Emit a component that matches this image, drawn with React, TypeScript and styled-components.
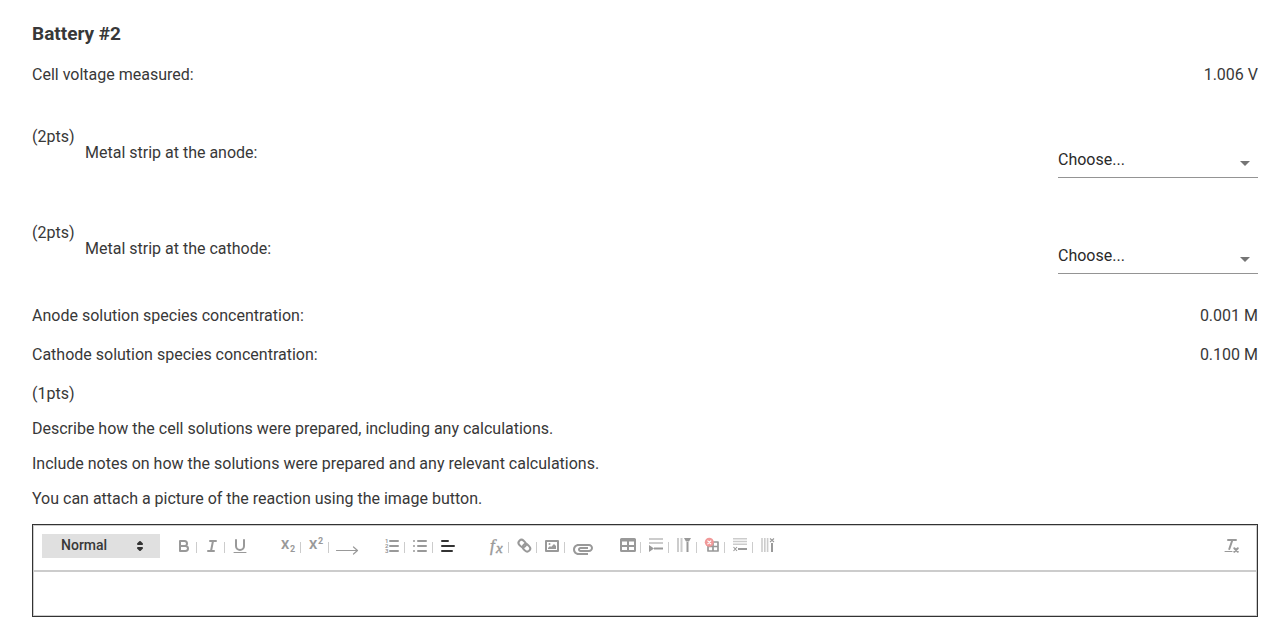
import React from "react";
import styled, { createGlobalStyle } from "styled-components";

const GlobalStyle = createGlobalStyle`
  *, *::before, *::after { box-sizing: border-box; }
  body {
    margin: 0;
    background: #fff;
    color: #383838;
    font: 400 16px/24px Roboto, sans-serif;
  }
`;

const Page = styled.main`
  padding: 22px 23px 5px 32px;
`;

const Title = styled.h3`
  margin: 0 0 17px;
  font-size: 19px;
  line-height: 24px;
  font-weight: 700;
`;

const ValueRow = styled.div`
  display: flex;
  justify-content: space-between;
  margin-bottom: 15px;
`;

const Question = styled.div`
  display: flex;
  align-items: flex-start;
  height: 58px;
  margin: 38px 0;

  & + & {
    margin-bottom: 25px;
  }
`;

const Points = styled.span`
  width: 53px;
`;

const QuestionLabel = styled.label`
  flex: 1;
  padding-top: 16px;
`;

const SelectField = styled.div`
  display: flex;
  align-items: center;
  width: 200px;
  height: 36px;
  margin-top: 17px;
  border-bottom: 1px solid #949494;
`;

const ChoiceSelect = styled.select`
  appearance: none;
  width: 100%;
  height: 35px;
  margin-right: -20px;
  padding: 0 20px 0 0;
  border: 0;
  background: transparent;
  color: #2a2a2a;
  font: inherit;
`;

const SelectArrow = styled.svg`
  flex: none;
  width: 10px;
  height: 5px;
  margin: 8px 8px 0 2px;
  fill: #757575;
  pointer-events: none;
`;

const Paragraph = styled.p`
  margin: 0 0 11px;
`;

const Editor = styled.section`
  margin-top: 13px;
  border: 1px solid #333;
`;

const Toolbar = styled.div`
  display: flex;
  flex-wrap: wrap;
  gap: 0 20px;
  padding: 8px 10px 12px 8px;
  border: 1px solid #ccc;
`;

const FormatPicker = styled.div`
  display: flex;
  align-items: center;
  width: 118px;
  height: 24px;
  margin-right: -10px;
  background: #e0e0e0;
`;

const FormatSelect = styled.select`
  appearance: none;
  width: 118px;
  height: 24px;
  margin-right: -29px;
  padding: 0 29px 2px 19px;
  border: 0;
  background: transparent;
  color: #383838;
  font: 500 14px/22px Roboto, sans-serif;
`;

const Group = styled.div`
  display: flex;
`;

const TrailingGroup = styled(Group)`
  margin-left: auto;
`;

const ToolButton = styled.button<{ $active?: boolean }>`
  display: flex;
  width: 26px;
  height: 24px;
  padding: 3px 3px 3px 5px;
  border: 0;
  background: none;
  color: ${(p) => (p.$active ? "#333" : "#999")};
  cursor: pointer;

  &:last-child {
    width: 28px;
  }
`;

const Separator = styled.span`
  width: 1px;
  height: 11px;
  margin: 8px 1px 0 0;
  background: #ccc;
`;

const IconSvg = styled.svg`
  flex: none;
  width: 18px;
  height: 18px;
  overflow: visible;
  fill: none;
  stroke: currentColor;
  stroke-width: 2;
  stroke-linecap: round;
  stroke-linejoin: round;

  text {
    fill: currentColor;
    stroke: none;
    font-family: Roboto, sans-serif;
    font-weight: 700;
  }
`;

const PickerIcon = styled(IconSvg)`
  margin-right: 11px;
  color: #333;
  pointer-events: none;
`;

const TextArea = styled.textarea`
  display: block;
  width: 100%;
  height: 45px;
  padding: 10px 14px;
  border: 1px solid #ccc;
  outline: 0;
  resize: none;
  font: inherit;
`;

const light = "#ccc";

const icons: Record<string, React.ReactNode> = {
  Bold: (
    <path d="M5 4h4.5a2.5 2.5 0 0 1 0 5H5zM5 9h5.5a2.5 2.5 0 0 1 0 5H5z" />
  ),
  Italic: <path d="M7 4h6M5 14h6M8 14l2-10" />,
  Underline: (
    <>
      <path d="M5 3v6a4 4 0 0 0 8 0V3" />
      <path d="M3 15.5h12" strokeWidth="1" />
    </>
  ),
  Subscript: (
    <>
      <text x="2" y="12" fontSize="13">X</text>
      <text x="11" y="15" fontSize="9">2</text>
    </>
  ),
  Superscript: (
    <>
      <text x="2" y="12" fontSize="13">X</text>
      <text x="11" y="7" fontSize="9">2</text>
    </>
  ),
  "Reaction arrow": <path d="M1.5 13.5H22M18.5 10l4 3.5-4 3.5" strokeWidth="1.2" />,
  "Numbered list": (
    <>
      <path d="M7 4h8M7 9h8M7 14h8" />
      <text x="2" y="6" fontSize="6">1</text>
      <text x="2" y="11" fontSize="6">2</text>
      <text x="2" y="16" fontSize="6">3</text>
    </>
  ),
  "Bullet list": <path d="M7 4h8M7 9h8M7 14h8M3 4h0M3 9h0M3 14h0" />,
  Align: <path d="M3 4h6M3 9h12M3 14h10" />,
  Formula: (
    <text x="3" y="14" fontSize="17" style={{ fontFamily: "Liberation Serif, serif", fontStyle: "italic", fontWeight: 400, stroke: "currentColor", strokeWidth: "0.4" }}>
      f<tspan x="9" y="16" fontSize="15">x</tspan>
    </text>
  ),
  Link: (
    <g transform="rotate(45 9 9)">
      <rect x="2" y="5.5" width="8" height="6" rx="3" />
      <rect x="8" y="5.5" width="8" height="6" rx="3" />
    </g>
  ),
  Image: (
    <>
      <path d="M3 4h12v10H3z" />
      <path d="M5 12v-1l2-2 1 1 3-3 2 2v3z" fill="currentColor" stroke="none" />
      <circle cx="6.5" cy="7" r="1" fill="currentColor" stroke="none" />
    </>
  ),
  Attachment: (
    <path
      fill="currentColor"
      stroke="none"
      d="M2 12.5C2 9.46 4.46 7 7.5 7H18c2.21 0 4 1.79 4 4s-1.79 4-4 4H9.5C8.12 15 7 13.88 7 12.5S8.12 10 9.5 10H17v2H9.41c-.55 0-.55 1 0 1H18c1.1 0 2-.9 2-2s-.9-2-2-2H7.5C5.57 9 4 10.57 4 12.5S5.57 16 7.5 16H17v2H7.5C4.46 18 2 15.54 2 12.5z"
    />
  ),
  "Insert table": (
    <>
      <rect x="2" y="2" width="14" height="12" rx="0.5" />
      <path d="M2 3.5h14M2 9h14M9 4v10" />
    </>
  ),
  "Insert row": (
    <g strokeLinecap="butt">
      <path d="M2 2h14M2 6h14" stroke={light} />
      <path d="M7 11.5h9" />
      <path d="M2 8l5 3.5-5 3.5z" fill="currentColor" stroke="none" />
    </g>
  ),
  "Insert column": (
    <g strokeLinecap="butt">
      <path d="M3 1v14M6.5 1v14" stroke={light} />
      <path d="M12.5 5v10" />
      <path d="M9 1h7l-2 3.5h-3z" fill="currentColor" stroke="none" />
    </g>
  ),
  "Delete table": (
    <>
      <path d="M5 5h10v9H5zM5 9.5h10M10 5v9" strokeWidth="1.7" />
      <circle cx="6.3" cy="5.3" r="4.5" fill="#f19999" stroke="none" />
      <path d="M4.8 3.8l3 3M7.8 3.8l-3 3" stroke="#fff" strokeWidth="1.2" />
    </>
  ),
  "Delete row": (
    <g strokeLinecap="butt">
      <path d="M2 1.7h14M2 4.5h14M2 7.3h14" stroke={light} strokeWidth="1.6" />
      <path d="M7 12h9" />
      <path d="M2.5 10l3.5 4M6 10l-3.5 4" strokeWidth="1.1" />
    </g>
  ),
  "Delete column": (
    <g strokeLinecap="butt">
      <path d="M3 1v14M5.8 1v14M8.6 1v14" stroke={light} strokeWidth="1.6" />
      <path d="M13 6v9" />
      <path d="M11 1.5l4 3.5M15 1.5L11 5" strokeWidth="1.1" />
    </g>
  ),
  "Clear formatting": (
    <>
      <path d="M5 3h8M6.3 12L9.4 3M11.3 11.3l3.5 3.5M14.8 11.3l-3.5 3.5" />
      <path d="M2 14.5h7" strokeWidth="1" />
    </>
  ),
};

const groups = [
  ["Bold", "Italic", "Underline"],
  ["Subscript", "Superscript", "Reaction arrow"],
  ["Numbered list", "Bullet list", "Align"],
  ["Formula", "Link", "Image", "Attachment"],
  ["Insert table", "Insert row", "Insert column", "Delete table", "Delete row", "Delete column"],
];

function Tool({ name }: { name: string }) {
  return (
    <ToolButton type="button" aria-label={name} $active={name === "Align"}>
      <IconSvg viewBox="0 0 18 18" aria-hidden="true">{icons[name]}</IconSvg>
    </ToolButton>
  );
}

function MetalQuestion({ id, label }: { id: string; label: string }) {
  return (
    <Question>
      <Points>(2pts)</Points>
      <QuestionLabel htmlFor={id}>{label}</QuestionLabel>
      <SelectField>
        <ChoiceSelect id={id}>
          <option>Choose...</option>
        </ChoiceSelect>
        <SelectArrow viewBox="0 0 10 5" aria-hidden="true">
          <path d="M0 0h10L5 5z" />
        </SelectArrow>
      </SelectField>
    </Question>
  );
}

function Value({ label, value }: { label: string; value: string }) {
  return (
    <ValueRow>
      <span>{label}</span>
      <span>{value}</span>
    </ValueRow>
  );
}

export default function App() {
  return (
    <>
      <GlobalStyle />
      <Page>
        <Title>Battery #2</Title>
        <Value label="Cell voltage measured:" value="1.006 V" />
        <MetalQuestion id="anode" label="Metal strip at the anode:" />
        <MetalQuestion id="cathode" label="Metal strip at the cathode:" />
        <Value label="Anode solution species concentration:" value="0.001 M" />
        <Value label="Cathode solution species concentration:" value="0.100 M" />
        <Paragraph>(1pts)</Paragraph>
        <Paragraph>Describe how the cell solutions were prepared, including any calculations.</Paragraph>
        <Paragraph>Include notes on how the solutions were prepared and any relevant calculations.</Paragraph>
        <Paragraph>You can attach a picture of the reaction using the image button.</Paragraph>
        <Editor>
          <Toolbar role="toolbar" aria-label="Formatting">
            <FormatPicker>
              <FormatSelect aria-label="Text style">
                <option>Normal</option>
              </FormatSelect>
              <PickerIcon viewBox="0 0 18 18" aria-hidden="true">
                <path d="M7 11l2 2 2-2zM7 7l2-2 2 2z" fill="currentColor" />
              </PickerIcon>
            </FormatPicker>
            {groups.map((names) => (
              <Group key={names[0]}>
                {names.map((name, i) => (
                  <React.Fragment key={name}>
                    {i > 0 && <Separator />}
                    <Tool name={name} />
                  </React.Fragment>
                ))}
              </Group>
            ))}
            <TrailingGroup>
              <Tool name="Clear formatting" />
            </TrailingGroup>
          </Toolbar>
          <TextArea aria-label="Cell preparation notes" />
        </Editor>
      </Page>
    </>
  );
}
